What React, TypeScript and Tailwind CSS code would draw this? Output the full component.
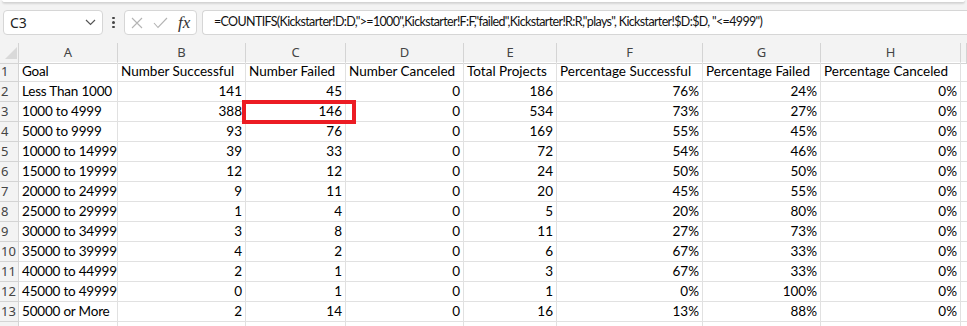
import React from "react";

const rows: string[][] = [
  ["Goal", "Number Successful", "Number Failed", "Number Canceled", "Total Projects", "Percentage Successful", "Percentage Failed", "Percentage Canceled"],
  ["Less Than 1000", "141", "45", "0", "186", "76%", "24%", "0%"],
  ["1000 to 4999", "388", "146", "0", "534", "73%", "27%", "0%"],
  ["5000 to 9999", "93", "76", "0", "169", "55%", "45%", "0%"],
  ["10000 to 14999", "39", "33", "0", "72", "54%", "46%", "0%"],
  ["15000 to 19999", "12", "12", "0", "24", "50%", "50%", "0%"],
  ["20000 to 24999", "9", "11", "0", "20", "45%", "55%", "0%"],
  ["25000 to 29999", "1", "4", "0", "5", "20%", "80%", "0%"],
  ["30000 to 34999", "3", "8", "0", "11", "27%", "73%", "0%"],
  ["35000 to 39999", "4", "2", "0", "6", "67%", "33%", "0%"],
  ["40000 to 44999", "2", "1", "0", "3", "67%", "33%", "0%"],
  ["45000 to 49999", "0", "1", "0", "1", "0%", "100%", "0%"],
  ["50000 or More", "2", "14", "0", "16", "13%", "88%", "0%"],
  ["", "", "", "", "", "", "", ""],
];

const cols = ["A", "B", "C", "D", "E", "F", "G", "H", ""];
const gridCols = "grid grid-cols-[19px_99px_128px_100px_118px_93px_146px_118px_140px_1fr]";

export default function App() {
  return (
    <div className="w-[967px] h-[326px] overflow-hidden bg-[#f3f3f3] relative" style={{ fontFamily: "Lato, 'Liberation Sans', sans-serif" }}>
      {/* ribbon edge */}
      <div className="h-[3px] mx-[2px] bg-white border-b border-[#d4d4d4] rounded-b-[4px] shadow-[0_1px_2px_rgba(0,0,0,0.12)]" />
      {/* formula bar */}
      <div className="h-[40px] flex items-start pt-[7px] pl-[3px]">
        <div className="w-[100px] h-[25px] bg-white border border-[#d6d6d6] rounded-[4px] flex items-center justify-between pl-[6px] pr-[6px]">
          <span className="text-[14px] text-[#222]" style={{ fontFamily: "'Noto Sans', 'Open Sans', sans-serif" }}>C3</span>
          <svg width="11" height="7" viewBox="0 0 11 7"><path d="M1 1 L5.5 5.5 L10 1" fill="none" stroke="#555" strokeWidth="1.2" /></svg>
        </div>
        <div className="w-[21px] h-[25px] flex flex-col items-center justify-center gap-[2px]">
          <div className="w-[2.5px] h-[2.5px] bg-[#444] rounded-full" />
          <div className="w-[2.5px] h-[2.5px] bg-[#444] rounded-full" />
          <div className="w-[2.5px] h-[2.5px] bg-[#444] rounded-full" />
        </div>
        <div className="w-[73px] h-[25px] bg-white border border-[#d6d6d6] rounded-[4px] flex items-center pl-[6px] gap-[10px]">
          <svg width="12" height="12" viewBox="0 0 12 12"><path d="M1 1 L11 11 M11 1 L1 11" stroke="#b4b4b4" strokeWidth="1.1" /></svg>
          <svg width="15" height="12" viewBox="0 0 15 12"><path d="M1 6 L5 10.5 L14 1" fill="none" stroke="#b4b4b4" strokeWidth="1.1" /></svg>
          <span className="italic text-[17px] text-[#333] leading-none" style={{ fontFamily: "'Liberation Serif', serif" }}>fx</span>
        </div>
        <div className="flex-1 ml-[5px] h-[25px] bg-white border border-[#d6d6d6] border-r-0 rounded-l-[4px] flex items-center pl-[11px]">
          <span className="text-[12.5px] tracking-[-0.65px] text-[#111] whitespace-nowrap">=COUNTIFS(Kickstarter!D:D,"&gt;=1000",Kickstarter!F:F,"failed",Kickstarter!R:R,"plays", Kickstarter!$D:$D, "&lt;=4999")</span>
        </div>
      </div>
      {/* sheet */}
      <div className="bg-white">
        <div className={`${gridCols} h-[19px] bg-[#f3f3f3]`}>
          <div className="border-r border-b border-[#d4d4d4] relative">
            <svg className="absolute left-[5px] top-[4px]" width="12" height="12" viewBox="0 0 12 12"><path d="M12 0 L12 12 L0 12 Z" fill="#d9d9d9" /></svg>
          </div>
          {cols.map((c, i) => (
            <div key={i} className="border-r border-b border-[#d4d4d4] flex items-center justify-center text-[13px] text-[#444]" style={{ fontFamily: "'Noto Sans', 'Open Sans', sans-serif" }}>
              {c}
            </div>
          ))}
        </div>
        {rows.map((r, ri) => (
          <div key={ri} className={`${gridCols} h-[20px]`}>
            <div className="bg-[#f3f3f3] border-r border-b border-[#d4d4d4] flex items-end pl-[1px] pb-[1px] text-[13px] text-[#444] leading-[17px]" style={{ fontFamily: "'Noto Sans', 'Open Sans', sans-serif" }}>
              {ri < 13 ? ri + 1 : ""}
            </div>
            {r.map((v, ci) => (
              <div
                key={ci}
                className={`border-r border-b border-[#e1e1e1] flex items-end pb-[1px] text-[13.5px] leading-[18px] text-black whitespace-nowrap overflow-visible ${ri > 0 && ci > 0 ? "justify-end pr-[3px]" : "pl-[3px]"} ${ci === 0 ? "tracking-[-0.2px]" : ""}`}
              >
                {v}
              </div>
            ))}
            <div className="border-b border-[#e1e1e1]" />
          </div>
        ))}
      </div>
      {/* selection highlight box */}
      <div className="absolute left-[242px] top-[100px] w-[114px] h-[24px] border-[4px] border-[#ec1c24]" />
    </div>
  );
}
